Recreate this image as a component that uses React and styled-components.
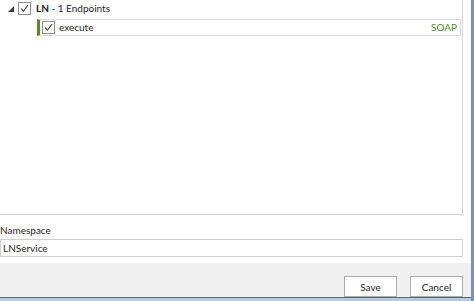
import styled, { createGlobalStyle } from "styled-components";

const GlobalStyle = createGlobalStyle`
  html, body {
    margin: 0;
    padding: 0;
    background: #ffffff;
  }
  body {
    font-family: "Segoe UI", Lato, "Open Sans", sans-serif;
    font-size: 10px;
    color: #1e1e1e;
  }
`;

const Window = styled.div`
  width: 474px;
  height: 301px;
  display: flex;
  overflow: hidden;
  background: #ffffff;
`;

const Main = styled.div`
  flex: 1;
  display: flex;
  flex-direction: column;
`;

const Edge = styled.div`
  width: 3px;
  background: #7394bd;
`;

const Body = styled.div`
  flex: 1;
  display: flex;
  flex-direction: column;
  padding-right: 8px;
`;

const ListPanel = styled.div`
  height: 215px;
  box-sizing: border-box;
  border-right: 1px solid #d4d4d4;
  border-bottom: 1px solid #d4d4d4;
  display: flex;
  flex-direction: column;
  padding-top: 1px;
`;

const GroupRow = styled.div`
  display: flex;
  align-items: center;
  height: 15px;
  padding-left: 8px;
  gap: 4px;
`;

const Expander = styled.svg`
  width: 6px;
  height: 6px;
  margin-top: 1px;
`;

const Check = styled.span`
  width: 11px;
  height: 11px;
  border: 1px solid #8f8f8f;
  background: #ffffff;
  display: flex;
  align-items: center;
  justify-content: center;
  flex-shrink: 0;
`;

const GroupLabel = styled.span`
  line-height: 15px;
  margin-left: 1px;
  b {
    font-weight: 700;
  }
`;

const ItemRow = styled.div`
  display: flex;
  align-items: center;
  margin: 3px 1px 0 37px;
  height: 15px;
  border: 1px solid #d8d8d8;
  border-left: 3px solid #5b8a22;
  padding-left: 2px;
  padding-right: 3px;
  gap: 4px;
`;

const ItemName = styled.span`
  flex: 1;
  line-height: 15px;
`;

const Protocol = styled.span`
  color: #4f8a2b;
  line-height: 15px;
`;

const Label = styled.div`
  margin-top: 7px;
  height: 16px;
  line-height: 16px;
`;

const TextBox = styled.div`
  height: 18px;
  box-sizing: border-box;
  border: 1px solid #cfcfcf;
  line-height: 16px;
  padding-left: 2px;
  margin-top: 1px;
`;

const Footer = styled.div`
  height: 34px;
  margin-top: 5px;
  background: #f0f0f0;
  display: flex;
  justify-content: flex-end;
  align-items: flex-end;
  gap: 13px;
  padding-right: 8px;
`;

const Button = styled.button`
  width: 53px;
  height: 21px;
  border: 1px solid #acacac;
  background: #ffffff;
  font-family: inherit;
  font-size: 10px;
  color: #1e1e1e;
  padding: 0;
`;

const BottomEdge = styled.div`
  height: 1px;
  background: #5c6670;
`;

const BottomGlow = styled.div`
  height: 3px;
  background: #b4cbe4;
`;

const Tick = () => (
  <svg width="9" height="9" viewBox="0 0 9 9">
    <path d="M1 4.5 L3.5 7.2 L8 1" fill="none" stroke="#3a3a3a" strokeWidth="1.1" />
  </svg>
);

export default function App() {
  return (
    <>
      <GlobalStyle />
      <Window>
        <Main>
          <Body>
            <ListPanel>
              <GroupRow>
                <Expander viewBox="0 0 6 6">
                  <path d="M6 0 L6 6 L0 6 Z" fill="#3c3c3c" />
                </Expander>
                <Check>
                  <Tick />
                </Check>
                <GroupLabel>
                  <b>LN</b> - 1 Endpoints
                </GroupLabel>
              </GroupRow>
              <ItemRow>
                <Check>
                  <Tick />
                </Check>
                <ItemName>execute</ItemName>
                <Protocol>SOAP</Protocol>
              </ItemRow>
            </ListPanel>
            <Label>Namespace</Label>
            <TextBox>LNService</TextBox>
          </Body>
          <Footer>
            <Button>Save</Button>
            <Button>Cancel</Button>
          </Footer>
          <BottomEdge />
          <BottomGlow />
        </Main>
        <Edge />
      </Window>
    </>
  );
}
